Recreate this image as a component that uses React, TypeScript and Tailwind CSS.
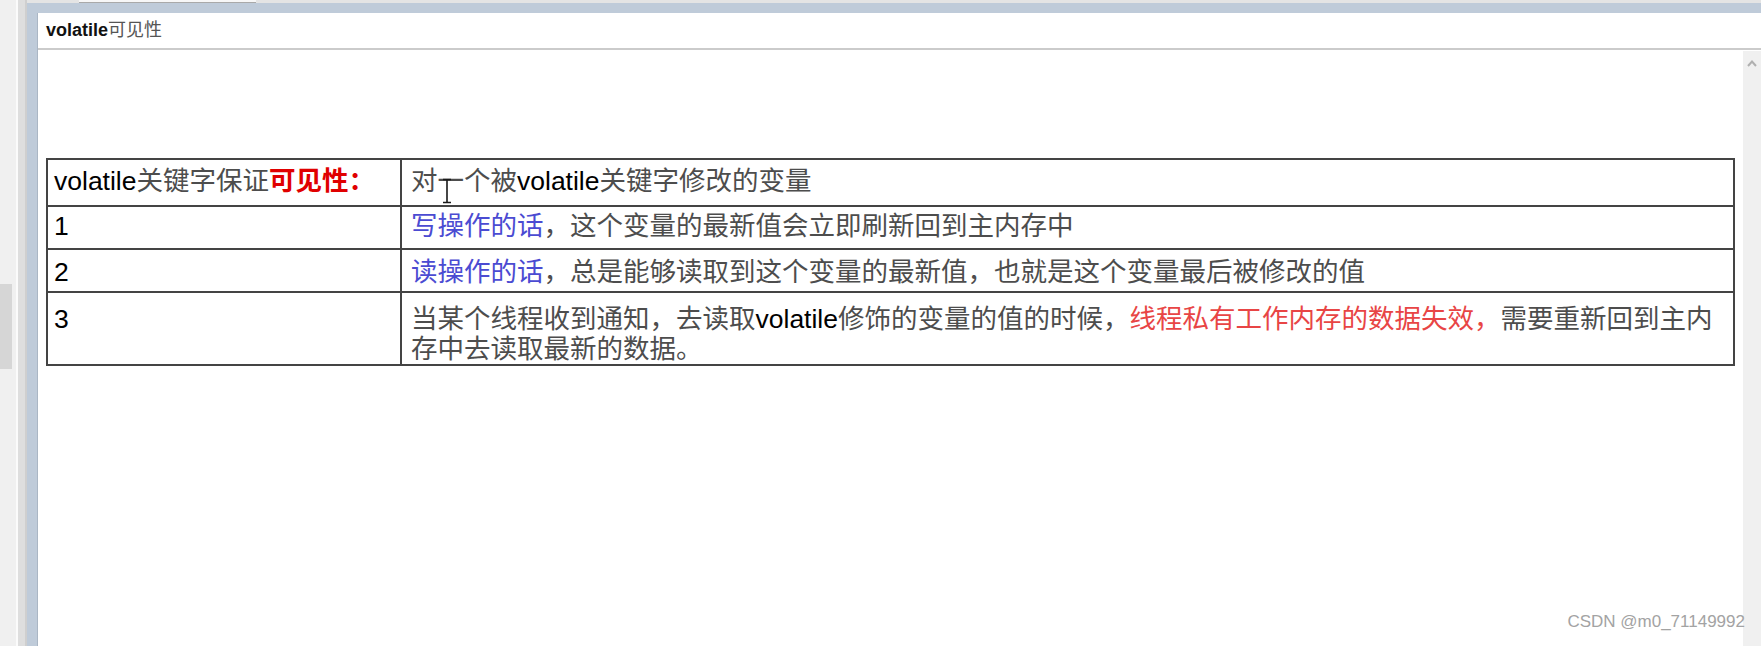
const FONT = { fontFamily: '"Liberation Sans", "Noto Sans CJK SC", sans-serif' };

function IBeam() {
  return (
    <svg className="absolute left-[40px] top-[18px]" width="10" height="26" viewBox="0 0 10 26">
      <path d="M1 1.5h8M5 1.5v23M1 24.5h8" stroke="#1a1a1a" strokeWidth="1.6" fill="none" />
    </svg>
  );
}

function Row({
  left,
  children,
  h,
  pt,
  first,
}: {
  left: React.ReactNode;
  children: React.ReactNode;
  h: string;
  pt: string;
  first?: boolean;
}) {
  return (
    <div className={`flex ${h} ${first ? '' : 'border-t-2 border-[#444]'}`}>
      <div className={`w-[354px] shrink-0 border-r-2 border-[#444] pl-[6px] text-black ${pt}`}>{left}</div>
      <div className={`relative min-w-0 flex-1 pl-[9px] text-[#4d4d4d] ${pt}`}>{children}</div>
    </div>
  );
}

export default function App() {
  return (
    <div className="relative flex h-[646px] w-full overflow-hidden bg-[#f0f0f0]" style={FONT}>
      {/* left rail */}
      <div className="flex h-full w-[27px] shrink-0">
        <div className="w-[16px] bg-[#f0f0f0] pt-[284px]">
          <div className="h-[85px] w-[12px] bg-[#d6d6d6]" />
        </div>
        <div className="w-[2px] bg-[#fbfbfb]" />
        <div className="w-[7px] bg-[#dedede]" />
        <div className="w-[2px] bg-[#cfcfcf]" />
      </div>

      <div className="flex min-w-0 flex-1 flex-col">
        {/* top strip with tab */}
        <div className="flex h-[3px] bg-[#e4e4e4]">
          <div className="ml-[52px] w-[177px] border-b border-[#a9a9a9] bg-[#f7f7f7]" />
        </div>

        {/* blue frame */}
        <div className="flex flex-1 flex-col bg-[#bfcbd9] pl-[10px] pt-[10px]">
          <div className="flex flex-1 flex-col border-l border-[#aab6c4] bg-white">
            <div className="flex h-[35px] items-center pl-[8px] text-[18px]">
              <span className="font-bold text-[#111]">volatile</span>
              <span className="text-[#555]">可见性</span>
            </div>
            <div className="h-[2px] bg-[#cbcbcb]" />

            <div className="flex flex-1">
              <div className="min-w-0 flex-1 px-[8px] pt-[108px] text-[26.5px] leading-[30px]">
                <div className="border-2 border-[#444]">
                  <Row
                    first
                    h="h-[45px]"
                    pt="pt-[6px]"
                    left={
                      <span>
                        volatile<span className="text-[#4d4d4d]">关键字保证</span>
                        <span className="font-bold text-[#e00000]">可见性：</span>
                      </span>
                    }
                  >
                    对一个被<span className="text-black">volatile</span>关键字修改的变量
                    <IBeam />
                  </Row>
                  <Row h="h-[43px]" pt="pt-[4px]" left="1">
                    <span className="text-[#4b4bd2]">写操作的话</span>，这个变量的最新值会立即刷新回到主内存中
                  </Row>
                  <Row h="h-[43px]" pt="pt-[7px]" left="2">
                    <span className="text-[#4b4bd2]">读操作的话</span>，总是能够读取到这个变量的最新值，也就是这个变量最后被修改的值
                  </Row>
                  <Row h="h-[73px]" pt="pt-[11px]" left="3">
                    <div className="whitespace-nowrap">
                      当某个线程收到通知，去读取<span className="text-black">volatile</span>修饰的变量的值的时候，
                      <span className="text-[#e84545]">线程私有工作内存的数据失效，</span>需要重新回到主内
                    </div>
                    <div className="whitespace-nowrap">存中去读取最新的数据。</div>
                  </Row>
                </div>
              </div>

              {/* scrollbar */}
              <div className="mt-[1px] flex w-[18px] shrink-0 justify-center bg-[#f0f0f0] pt-[9px]">
                <svg width="10" height="7" viewBox="0 0 10 7">
                  <path d="M1 6l4-4.5L9 6" stroke="#b0b0b0" strokeWidth="2" fill="none" />
                </svg>
              </div>
            </div>
          </div>
        </div>
      </div>

      <div className="absolute right-[16px] top-[611px] text-[17px] leading-[22px] text-[#a3a3a3]">
        CSDN @m0_71149992
      </div>
    </div>
  );
}
